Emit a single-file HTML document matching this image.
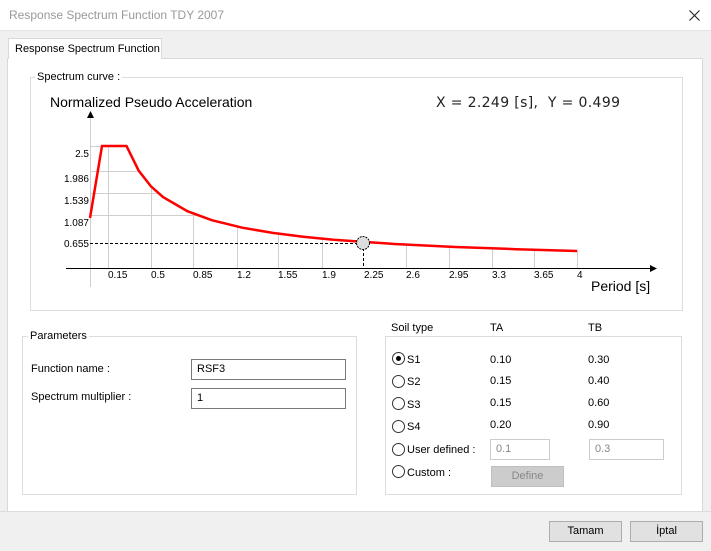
<!DOCTYPE html>
<html><head><meta charset="utf-8"><style>
*{box-sizing:border-box}
body{margin:0;width:711px;height:551px;background:#f0f0f0;font-family:"Liberation Sans",sans-serif;font-size:11px;color:#000;position:relative;overflow:hidden}
.a{position:absolute}
.box{position:absolute;border:1px solid #dcdcdc}
.leg{position:absolute;background:#fff;padding:0 2px;font-size:11px}
.inp{position:absolute;border:1px solid #7a7a7a;background:#fff;padding:3px 5px;font-size:11px}
.rad{position:absolute;width:13px;height:13px;border:1px solid #333;border-radius:50%;background:#fff}
.btn{position:absolute;border:1px solid #adadad;background:#e1e1e1;text-align:center;line-height:19px;font-size:11px}
</style></head><body>
<div class="a" style="left:0;top:0;width:711px;height:31px;background:#fff;border-bottom:1px solid #e5e5e5"></div>
<div class="a" style="left:9px;top:8px;font-size:12px;color:#999">Response Spectrum Function TDY 2007</div>
<svg class="a" style="left:689px;top:10px" width="11" height="11"><path d="M0.5 0.5L10.5 10.5M10.5 0.5L0.5 10.5" stroke="#222" stroke-width="1.1"/></svg>
<div class="a" style="left:7px;top:58px;width:696px;height:454px;background:#fff;border:1px solid #d9d9d9"></div>
<div class="a" style="left:8px;top:38px;width:154px;height:21px;background:#fff;border:1px solid #d9d9d9;border-bottom:none;padding:4px 0 0 6px">Response Spectrum Function</div>
<div class="a" style="left:0;top:511px;width:711px;height:1px;background:#dcdcdc"></div>

<div class="box" style="left:30px;top:77px;width:653px;height:234px"></div>
<div class="leg" style="left:35px;top:71px">Spectrum curve :</div>
<div class="a" style="left:50px;top:94px;font-size:14px">Normalized Pseudo Acceleration</div>
<div class="a" style="left:436px;top:95px;font-size:14px;font-family:'DejaVu Sans',sans-serif;color:#222;letter-spacing:0.35px">X = 2.249 [s],&nbsp; Y = 0.499</div>
<div class="a" style="left:591px;top:278px;font-size:14px">Period [s]</div>

<svg class="a" style="left:0;top:0" width="711" height="320">
<g stroke="#cfcfcf" stroke-width="1">
<line x1="90.5" y1="112" x2="90.5" y2="287"/>
<line x1="90" y1="146.5" x2="126" y2="146.5"/>
<line x1="90" y1="171.5" x2="140" y2="171.5"/>
<line x1="90" y1="193.5" x2="160" y2="193.5"/>
<line x1="90" y1="215.5" x2="200" y2="215.5"/>
<g>
<line x1="108.5" y1="146" x2="108.5" y2="268"/>
<line x1="151.5" y1="186" x2="151.5" y2="268"/>
<line x1="193.5" y1="212" x2="193.5" y2="268"/>
<line x1="237.5" y1="226" x2="237.5" y2="268"/>
<line x1="278.5" y1="232" x2="278.5" y2="268"/>
<line x1="322.5" y1="237" x2="322.5" y2="268"/>
<line x1="406.5" y1="244" x2="406.5" y2="268"/>
<line x1="449.5" y1="246" x2="449.5" y2="268"/>
<line x1="492.5" y1="248" x2="492.5" y2="268"/>
<line x1="534.5" y1="250" x2="534.5" y2="268"/>
<line x1="577.5" y1="251" x2="577.5" y2="268"/>
</g></g>
<line x1="66" y1="268.5" x2="650" y2="268.5" stroke="#000"/>
<path d="M650 265 L657 268.5 L650 272Z" fill="#000"/>
<path d="M87 118 L90.5 111 L94 118Z" fill="#000"/>
<line x1="90" y1="243.5" x2="363" y2="243.5" stroke="#000" stroke-dasharray="3,2"/>
<line x1="363.5" y1="243" x2="363.5" y2="268" stroke="#000" stroke-dasharray="3,2"/>
<polyline fill="none" stroke="#f00" stroke-width="2.5" points="90,218 102,146 126.5,146 138.7,170.7 150.9,186.3 163.1,197.1 187.4,211.2 211.8,220.2 242.3,227.7 272.7,232.9 303.2,236.7 333.6,239.7 394.5,244 455.4,247 516.3,249.2 577.2,251"/>
<circle cx="363" cy="243" r="6.5" fill="#ddd" stroke="#000" stroke-dasharray="2,1"/>
<g font-family="Liberation Sans,sans-serif" font-size="10" fill="#000">
<text x="89" y="157" text-anchor="end">2.5</text>
<text x="89" y="182" text-anchor="end">1.986</text>
<text x="89" y="204" text-anchor="end">1.539</text>
<text x="89" y="226" text-anchor="end">1.087</text>
<text x="89" y="247" text-anchor="end">0.655</text>
<text x="108" y="278">0.15</text>
<text x="151" y="278">0.5</text>
<text x="193" y="278">0.85</text>
<text x="237" y="278">1.2</text>
<text x="278" y="278">1.55</text>
<text x="322" y="278">1.9</text>
<text x="364" y="278">2.25</text>
<text x="406" y="278">2.6</text>
<text x="449" y="278">2.95</text>
<text x="492" y="278">3.3</text>
<text x="534" y="278">3.65</text>
<text x="577" y="278">4</text>
</g>
</svg>

<div class="box" style="left:22px;top:336px;width:335px;height:159px"></div>
<div class="leg" style="left:28px;top:330px">Parameters</div>
<div class="a" style="left:31px;top:363px">Function name :</div>
<div class="a" style="left:31px;top:391px">Spectrum multiplier :</div>
<div class="inp" style="left:191px;top:359px;width:155px;height:21px">RSF3</div>
<div class="inp" style="left:191px;top:388px;width:155px;height:21px">1</div>

<div class="a" style="left:391px;top:322px">Soil type</div>
<div class="a" style="left:490px;top:322px">TA</div>
<div class="a" style="left:588px;top:322px">TB</div>
<div class="box" style="left:385px;top:336px;width:297px;height:159px"></div>
<div class="rad" style="left:392px;top:352px"><div class="a" style="left:3px;top:3px;width:5px;height:5px;border-radius:50%;background:#000"></div></div>
<div class="rad" style="left:392px;top:375px"></div>
<div class="rad" style="left:392px;top:397px"></div>
<div class="rad" style="left:392px;top:420px"></div>
<div class="rad" style="left:392px;top:443px"></div>
<div class="rad" style="left:392px;top:465px"></div>
<div class="a" style="left:407px;top:354px">S1</div>
<div class="a" style="left:407px;top:376px">S2</div>
<div class="a" style="left:407px;top:399px">S3</div>
<div class="a" style="left:407px;top:421px">S4</div>
<div class="a" style="left:407px;top:444px">User defined :</div>
<div class="a" style="left:407px;top:467px">Custom :</div>
<div class="a" style="left:490px;top:354px">0.10</div><div class="a" style="left:588px;top:354px">0.30</div>
<div class="a" style="left:490px;top:375px">0.15</div><div class="a" style="left:588px;top:375px">0.40</div>
<div class="a" style="left:490px;top:397px">0.15</div><div class="a" style="left:588px;top:397px">0.60</div>
<div class="a" style="left:490px;top:419px">0.20</div><div class="a" style="left:588px;top:419px">0.90</div>
<div class="inp" style="left:490px;top:439px;width:60px;height:21px;border-color:#ccc;color:#888">0.1</div>
<div class="inp" style="left:589px;top:439px;width:75px;height:21px;border-color:#ccc;color:#888">0.3</div>
<div class="btn" style="left:491px;top:466px;width:73px;height:21px;background:#ccc;border-color:#bfbfbf;color:#888">Define</div>

<div class="btn" style="left:549px;top:521px;width:73px;height:21px">Tamam</div>
<div class="btn" style="left:630px;top:521px;width:73px;height:21px">İptal</div>
</body></html>
